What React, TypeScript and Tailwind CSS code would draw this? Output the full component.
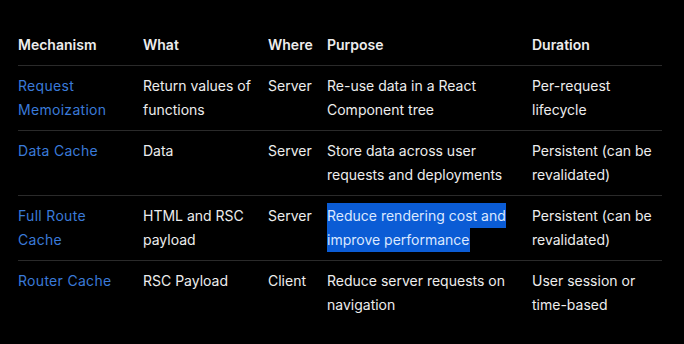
const rows = [
  {
    mechanism: 'Request Memoization',
    what: 'Return values of functions',
    where: 'Server',
    purpose: 'Re-use data in a React Component tree',
    duration: 'Per-request lifecycle',
  },
  {
    mechanism: 'Data Cache',
    what: 'Data',
    where: 'Server',
    purpose: 'Store data across user requests and deployments',
    duration: 'Persistent (can be revalidated)',
  },
  {
    mechanism: 'Full Route Cache',
    what: 'HTML and RSC payload',
    where: 'Server',
    purpose: 'Reduce rendering cost and improve performance',
    duration: 'Persistent (can be revalidated)',
    selected: true,
  },
  {
    mechanism: 'Router Cache',
    what: 'RSC Payload',
    where: 'Client',
    purpose: 'Reduce server requests on navigation',
    duration: 'User session or time-based',
  },
];

const cols = ['w-[125px]', 'w-[125px]', 'w-[59px]', 'w-[205px]', 'w-[130px]'];

export default function App() {
  return (
    <div
      className="h-[344px] w-[684px] bg-black pt-[25px] pl-[18px] text-[14px] leading-6 text-[#ededed]"
      style={{ fontFamily: 'Inter, "Liberation Sans", sans-serif' }}
    >
      <table className="table-fixed border-collapse text-left">
        <thead>
          <tr className="border-b border-[#2a2a2a]">
            {['Mechanism', 'What', 'Where', 'Purpose', 'Duration'].map((h, i) => (
              <th key={h} className={`${cols[i]} pt-2 pb-2 pr-3 align-top font-semibold`}>
                {h}
              </th>
            ))}
          </tr>
        </thead>
        <tbody>
          {rows.map((r, idx) => (
            <tr
              key={r.mechanism}
              className={idx < rows.length - 1 ? 'border-b border-[#2a2a2a]' : ''}
            >
              <td className="h-[65px] py-2 pr-6 align-top tracking-[0.3px] text-[#3a7ad8]">
                {r.mechanism}
              </td>
              <td className="py-2 pr-3 align-top">{r.what}</td>
              <td className="py-2 pr-3 align-top">{r.where}</td>
              <td className="py-2 pr-3 align-top">
                {r.selected ? (
                  <span className="box-decoration-clone bg-[#0b5cd5] py-1 text-[#dbe8ff]">
                    {r.purpose}
                  </span>
                ) : (
                  r.purpose
                )}
              </td>
              <td className="py-2 pr-1 align-top">{r.duration}</td>
            </tr>
          ))}
        </tbody>
      </table>
    </div>
  );
}
